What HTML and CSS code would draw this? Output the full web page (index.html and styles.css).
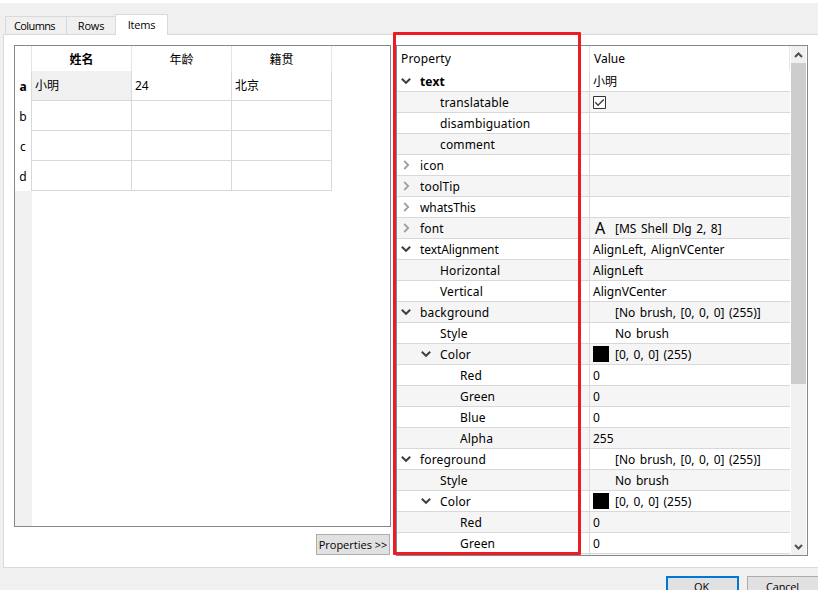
FILE: index.html
```html
<!DOCTYPE html>
<html lang="en">
<head>
    <meta charset="UTF-8">
    <meta name="viewport" content="width=device-width, initial-scale=1.0">
    <title>Edit Table Widget</title>
    <link rel="stylesheet" href="styles.css">
</head>
<body>
    <svg class="symbols" width="0" height="0">
        <symbol id="open" viewBox="0 0 10 10"><path d="M.8 2.8 L5 6.8 L9.2 2.8" fill="none" stroke="#404040" stroke-width="2"/></symbol>
        <symbol id="closed" viewBox="0 0 10 10"><path d="M3.2 1 L7.2 5 L3.2 9" fill="none" stroke="#a0a0a0" stroke-width="1.8"/></symbol>
    </svg>

    <div class="tabs">
        <div class="tab columns">Columns</div>
        <div class="tab rows">Rows</div>
        <div class="tab items active">Items</div>
    </div>

    <div class="pane">
        <div class="left">
            <div class="table-view">
                <table class="grid">
                    <tr class="head"><th></th><th class="current">姓名</th><th>年龄</th><th>籍贯</th></tr>
                    <tr><th class="current">a</th><td class="selected">小明</td><td>24</td><td>北京</td></tr>
                    <tr><th>b</th><td></td><td></td><td></td></tr>
                    <tr><th>c</th><td></td><td></td><td></td></tr>
                    <tr><th>d</th><td></td><td></td><td></td></tr>
                </table>
                <div class="header-rest"></div>
            </div>
            <button class="properties-button">Properties &gt;&gt;</button>
        </div>

        <div class="tree-view">
            <div class="tree">
                <div class="row head"><div class="name">Property</div><div class="value">Value</div></div>
                <div class="row"><div class="name"><svg class="arrow"><use href="#open"/></svg><b>text</b></div><div class="value">小明</div></div>
                <div class="row"><div class="name level1">translatable</div><div class="value"><svg class="checkbox" viewBox="0 0 13 13"><path d="M.5 .5 H12.5 V12.5 H.5 Z" fill="#fff" stroke="#333"/><path d="M2.3 6.3 L5 9.2 L10.8 3.4" fill="none" stroke="#404040" stroke-width="1.4"/></svg></div></div>
                <div class="row"><div class="name level1">disambiguation</div><div class="value"></div></div>
                <div class="row"><div class="name level1">comment</div><div class="value"></div></div>
                <div class="row"><div class="name"><svg class="arrow"><use href="#closed"/></svg>icon</div><div class="value"></div></div>
                <div class="row"><div class="name"><svg class="arrow"><use href="#closed"/></svg>toolTip</div><div class="value"></div></div>
                <div class="row"><div class="name tight"><svg class="arrow"><use href="#closed"/></svg>whatsThis</div><div class="value"></div></div>
                <div class="row"><div class="name"><svg class="arrow"><use href="#closed"/></svg>font</div><div class="value"><span class="font-icon">A</span>[MS Shell Dlg 2, 8]</div></div>
                <div class="row"><div class="name tight"><svg class="arrow"><use href="#open"/></svg>textAlignment</div><div class="value">AlignLeft, AlignVCenter</div></div>
                <div class="row"><div class="name level1">Horizontal</div><div class="value">AlignLeft</div></div>
                <div class="row"><div class="name level1">Vertical</div><div class="value">AlignVCenter</div></div>
                <div class="row"><div class="name"><svg class="arrow"><use href="#open"/></svg>background</div><div class="value indent">[No brush, [0, 0, 0] (255)]</div></div>
                <div class="row"><div class="name level1">Style</div><div class="value indent">No brush</div></div>
                <div class="row"><div class="name nested"><svg class="arrow"><use href="#open"/></svg>Color</div><div class="value"><span class="swatch"></span>[0, 0, 0] (255)</div></div>
                <div class="row"><div class="name level2">Red</div><div class="value">0</div></div>
                <div class="row"><div class="name level2">Green</div><div class="value">0</div></div>
                <div class="row"><div class="name level2">Blue</div><div class="value">0</div></div>
                <div class="row"><div class="name level2">Alpha</div><div class="value">255</div></div>
                <div class="row"><div class="name"><svg class="arrow"><use href="#open"/></svg>foreground</div><div class="value indent">[No brush, [0, 0, 0] (255)]</div></div>
                <div class="row"><div class="name level1">Style</div><div class="value indent">No brush</div></div>
                <div class="row"><div class="name nested"><svg class="arrow"><use href="#open"/></svg>Color</div><div class="value"><span class="swatch"></span>[0, 0, 0] (255)</div></div>
                <div class="row"><div class="name level2">Red</div><div class="value">0</div></div>
                <div class="row"><div class="name level2">Green</div><div class="value">0</div></div>
                <div class="row"><div class="name"></div><div class="value"></div></div>
            </div>
            <div class="scrollbar">
                <svg class="scroll-arrow" viewBox="0 0 15 17"><path d="M4 11 L7.5 7.5 L11 11" fill="none" stroke="#505050" stroke-width="2"/></svg>
                <div class="thumb"></div>
                <svg class="scroll-arrow bottom" viewBox="0 0 15 17"><path d="M4 7 L7.5 10.5 L11 7" fill="none" stroke="#505050" stroke-width="2"/></svg>
            </div>
            <div class="marker"></div>
        </div>
    </div>

    <div class="buttons">
        <button class="ok">OK</button>
        <button class="cancel">Cancel</button>
    </div>
</body>
</html>
```
FILE: styles.css
```css
* {
    box-sizing: border-box;
}

body {
    margin: 0;
    height: 590px;
    overflow: hidden;
    background-color: #f0f0f0;
    border-top: 3px solid #fff;
    font-family: "Noto Sans", "Noto Sans CJK SC", sans-serif;
    font-size: 12px;
    color: #000;
}

.symbols {
    display: block;
}

.tabs {
    display: flex;
    align-items: flex-end;
    height: 31px;
    padding-left: 5px;
}

.tab {
    height: 18px;
    border: 1px solid #d9d9d9;
    border-bottom: none;
    border-right: none;
    text-align: center;
    line-height: 18px;
    font-family: "Open Sans", sans-serif;
    font-size: 11px;
    letter-spacing: -0.2px;
}

.columns {
    width: 61px;
    padding-right: 3px;
    letter-spacing: -0.6px;
}

.rows {
    width: 49px;
}

.items {
    width: 53px;
}

.tab.active {
    position: relative;
    height: 21px;
    margin-bottom: -1px;
    border-right: 1px solid #d9d9d9;
    background-color: #fff;
    line-height: 19px;
}

.pane {
    display: flex;
    width: 830px;
    height: 534px;
    margin-left: 3px;
    padding: 10px;
    border: 1px solid #d9d9d9;
    background-color: #fff;
}

.left {
    display: flex;
    flex-direction: column;
    width: 377px;
    margin-right: 5px;
}

.table-view {
    display: flex;
    flex-direction: column;
    height: 482px;
    border: 1px solid #828790;
}

.grid {
    width: 317px;
    table-layout: fixed;
    border-collapse: separate;
    border-spacing: 0;
}

.grid th,
.grid td {
    width: 100px;
    height: 30px;
    padding: 0 3px;
    border-right: 1px solid #d8d8d8;
    border-bottom: 1px solid #d8d8d8;
    text-align: left;
    font-weight: normal;
    line-height: 18px;
}

.grid th {
    padding: 2px 0 0;
    border-bottom: none;
    text-align: center;
}

.grid th:first-child {
    width: 17px;
}

.grid .head th {
    height: 25px;
    border-right-color: #e5e5e5;
}

.grid .current {
    font-weight: bold;
}

.grid .selected {
    background-color: #f0f0f0;
}

.header-rest {
    flex: 1;
    width: 17px;
    background-color: #f0f0f0;
}

button {
    padding: 0;
    border: 1px solid #adadad;
    background-color: #e1e1e1;
    color: #000;
    font-family: "Open Sans", sans-serif;
    font-size: 11px;
}

.properties-button {
    align-self: flex-end;
    width: 74px;
    height: 21px;
    margin: 7px 1px 0 0;
    white-space: nowrap;
}

.tree-view {
    position: relative;
    display: flex;
    width: 412px;
    height: 511px;
    border: 1px solid #828790;
}

.tree {
    width: 394px;
    overflow: hidden;
    letter-spacing: 0.15px;
}

.row {
    display: flex;
    width: 393px;
    height: 21px;
    border-bottom: 1px solid #d8d8d8;
    line-height: 21px;
    white-space: nowrap;
}

.row:nth-child(odd) {
    background-color: #f5f5f5;
}

.row.head {
    height: 25px;
    border-bottom: none;
    background-color: #fff;
    line-height: 26px;
}

.name {
    display: flex;
    width: 193px;
    padding-left: 4px;
    border-right: 1px solid #d8d8d8;
}

.tight {
    letter-spacing: -0.1px;
}

.level1 {
    padding-left: 43px;
}

.level2 {
    padding-left: 63px;
}

.nested {
    padding-left: 24px;
}

.arrow {
    width: 10px;
    height: 10px;
    margin: 5px 9px 0 0;
}

.value {
    display: flex;
    width: 200px;
    padding-left: 3px;
    letter-spacing: 0;
    word-spacing: 1.4px;
}

.head .name,
.head .value {
    padding-left: 4px;
    border-right: 1px solid #e5e5e5;
}

.indent {
    padding-left: 25px;
}

.checkbox {
    width: 13px;
    height: 13px;
    margin-top: 4px;
}

.font-icon {
    width: 22px;
    padding-left: 2px;
    font-size: 16px;
}

.swatch {
    width: 16px;
    height: 16px;
    margin: 2px 6px 0 0;
    background-color: #000;
}

.scrollbar {
    display: flex;
    flex-direction: column;
    width: 15px;
    background-color: #f0f0f0;
}

.scroll-arrow {
    width: 15px;
    height: 17px;
}

.thumb {
    height: 321px;
    background-color: #cdcdcd;
}

.bottom {
    margin-top: auto;
}

/* red frame over the property column */
.marker {
    position: absolute;
    left: -4px;
    top: -14px;
    width: 188px;
    height: 523px;
    border: 3px solid #ed1c24;
    border-radius: 1px;
}

.buttons {
    display: flex;
    justify-content: flex-end;
    gap: 8px;
    width: 820px;
    margin-top: 8px;
}

.buttons button {
    width: 73px;
    height: 23px;
    padding-bottom: 2px;
    letter-spacing: -0.2px;
}

.buttons .ok {
    padding-right: 2px;
    border: 2px solid #0078d7;
}

.buttons .cancel {
    padding-right: 2px;
}
```
